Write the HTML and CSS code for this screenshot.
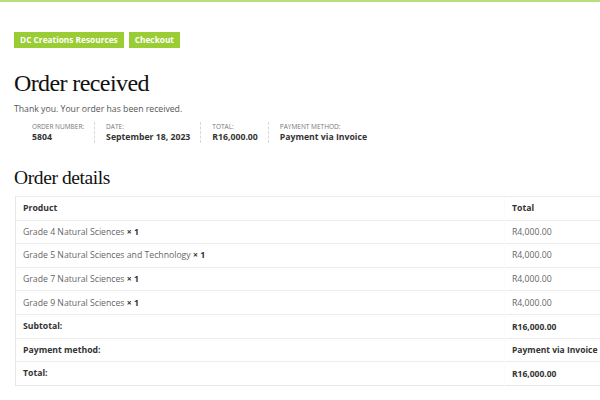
FILE: index.html
```html
<!DOCTYPE html>
<html>
<head>
<meta charset="utf-8">
<link rel="stylesheet" href="styles.css">
</head>
<body>
<div class="topline"></div>
<main class="page">
  <nav class="crumbs">
    <a class="btn" href="#">DC Creations Resources</a>
    <a class="btn" href="#">Checkout</a>
  </nav>
  <h1 class="title">Order received</h1>
  <p class="thanks">Thank you. Your order has been received.</p>
  <ul class="overview">
    <li class="ov-item"><span class="ov-label">Order number:</span><strong class="ov-value">5804</strong></li>
    <li class="ov-item"><span class="ov-label">Date:</span><strong class="ov-value">September 18, 2023</strong></li>
    <li class="ov-item"><span class="ov-label">Total:</span><strong class="ov-value">R16,000.00</strong></li>
    <li class="ov-item"><span class="ov-label">Payment method:</span><strong class="ov-value">Payment via Invoice</strong></li>
  </ul>
  <h2 class="subtitle">Order details</h2>
  <table class="details">
    <thead>
      <tr><th class="c-prod">Product</th><th class="c-total">Total</th></tr>
    </thead>
    <tbody>
      <tr><td>Grade 4 Natural Sciences <strong class="qty">× 1</strong></td><td>R4,000.00</td></tr>
      <tr><td>Grade 5 Natural Sciences and Technology <strong class="qty">× 1</strong></td><td>R4,000.00</td></tr>
      <tr><td>Grade 7 Natural Sciences <strong class="qty">× 1</strong></td><td>R4,000.00</td></tr>
      <tr><td>Grade 9 Natural Sciences <strong class="qty">× 1</strong></td><td>R4,000.00</td></tr>
    </tbody>
    <tfoot>
      <tr><th>Subtotal:</th><td class="strong">R16,000.00</td></tr>
      <tr><th>Payment method:</th><td class="strong">Payment via Invoice</td></tr>
      <tr><th>Total:</th><td class="strong">R16,000.00</td></tr>
    </tfoot>
  </table>
</main>
</body>
</html>
```
FILE: styles.css
```css
html, body {
  margin: 0;
  padding: 0;
  background: #fff;
  overflow: hidden;
}
body {
  font-family: "Open Sans", "Liberation Sans", sans-serif;
  color: #666;
  width: 600px;
  height: 400px;
}
.topline {
  height: 2px;
  background: #b9df7a;
}
.page {
  padding: 30px 0 0 14px;
  width: 620px;
}
.crumbs {
  display: flex;
  gap: 5px;
}
.btn {
  display: inline-block;
  background: #9acc34;
  color: #fff;
  font-weight: 700;
  font-size: 8.3px;
  line-height: 16px;
  padding: 0 6px;
  text-decoration: none;
}
.title {
  font-family: "Liberation Serif", "Times New Roman", serif;
  font-weight: 400;
  font-size: 24px;
  letter-spacing: -0.6px;
  line-height: 28px;
  color: #111;
  margin: 21px 0 0 0;
}
.thanks {
  font-size: 8.7px;
  line-height: 12px;
  margin: 6px 0 0 0;
  color: #555;
}
.overview {
  list-style: none;
  display: flex;
  margin: 7px 0 0 18px;
  padding: 0;
}
.ov-item {
  display: flex;
  flex-direction: column;
  padding: 0 10px 0 0;
  margin-right: 11px;
  border-right: 1px dashed #d8d8d8;
}
.ov-item:last-child {
  border-right: 0;
}
.ov-label {
  font-size: 6.5px;
  line-height: 9px;
  text-transform: uppercase;
  color: #777;
}
.ov-value {
  font-size: 8.7px;
  line-height: 12px;
  color: #333;
}
.subtitle {
  font-family: "Liberation Serif", "Times New Roman", serif;
  font-weight: 400;
  font-size: 19.5px;
  letter-spacing: -0.4px;
  line-height: 22px;
  color: #111;
  margin: 24px 0 0 0;
}
.details {
  margin: 7px 0 0 1px;
  width: 605px;
  border-collapse: collapse;
  border: 1px solid #e6e6e6;
  font-size: 8.7px;
}
.details th, .details td {
  text-align: left;
  padding: 0 7px;
  height: 22.6px;
  border-top: 1px solid #ececec;
  font-weight: 400;
}
.details th {
  font-weight: 700;
  color: #333;
}
.details td:last-child, .details th:last-child {
  width: 100px;
  border-left: 1px solid #fbfbfb;
}
.c-prod { width: auto; }
.qty { color: #333; }
.details td.strong { font-weight: 700; color: #333; font-size: 8.5px; }
```
